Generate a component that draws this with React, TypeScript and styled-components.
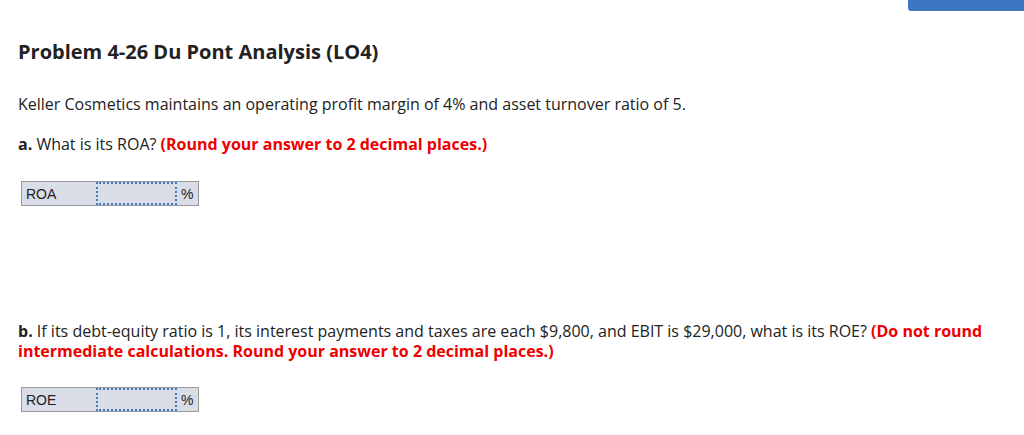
import styled, { createGlobalStyle } from 'styled-components';

const GlobalStyle = createGlobalStyle`
  body {
    margin: 0;
    background: #ffffff;
    font-family: "Open Sans", Lato, sans-serif;
    color: #222222;
  }
`;

const Page = styled.div`
  position: relative;
  width: 1024px;
  height: 435px;
  overflow: hidden;
  padding: 0 18px;
  box-sizing: border-box;
`;

const TopButton = styled.div`
  position: absolute;
  top: 0;
  right: 0;
  width: 116px;
  height: 11px;
  background: #3b78c1;
  border-bottom-left-radius: 3px;
`;

const Title = styled.h1`
  margin: 0;
  padding-top: 40px;
  font-size: 20px;
  font-weight: 700;
  line-height: 24px;
  color: #222222;
`;

const Text = styled.p<{ $top: number }>`
  margin: ${(p) => p.$top}px 0 0;
  font-size: 16px;
  line-height: 20px;
`;

const Red = styled.span`
  color: #ee0000;
  font-weight: 700;
`;

const Answer = styled.div<{ $top: number }>`
  display: flex;
  margin: ${(p) => p.$top}px 0 0 3px;
  width: 178px;
  height: 25px;
  box-sizing: border-box;
  border: 1px solid #999999;
  background: #d9dde8;
  font-family: "Liberation Sans", Arial, sans-serif;
  font-size: 14px;
  color: #222222;
`;

const Label = styled.div`
  width: 74px;
  display: flex;
  align-items: center;
  padding-left: 4px;
  box-sizing: border-box;
`;

const Input = styled.div`
  width: 81px;
  border: 2px dotted #3f7ac4;
  box-sizing: border-box;
`;

const Unit = styled.div`
  flex: 1;
  display: flex;
  align-items: center;
  padding-left: 4px;
`;

function AnswerBox({ label, top }: { label: string; top: number }) {
  return (
    <Answer $top={top}>
      <Label>{label}</Label>
      <Input />
      <Unit>%</Unit>
    </Answer>
  );
}

export default function App() {
  return (
    <>
      <GlobalStyle />
      <Page>
        <TopButton />
        <Title>Problem 4-26 Du Pont Analysis (LO4)</Title>
        <Text $top={30}>
          Keller Cosmetics maintains an operating profit margin of 4% and asset turnover ratio of 5.
        </Text>
        <Text $top={20}>
          <b>a.</b> What is its ROA? <Red>(Round your answer to 2 decimal places.)</Red>
        </Text>
        <AnswerBox label="ROA" top={27} />
        <Text $top={115}>
          <b>b.</b> If its debt-equity ratio is 1, its interest payments and taxes are each $9,800, and EBIT
          is $29,000, what is its ROE? <Red>(Do not round intermediate calculations. Round your answer to 2 decimal places.)</Red>
        </Text>
        <AnswerBox label="ROE" top={26} />
      </Page>
    </>
  );
}
